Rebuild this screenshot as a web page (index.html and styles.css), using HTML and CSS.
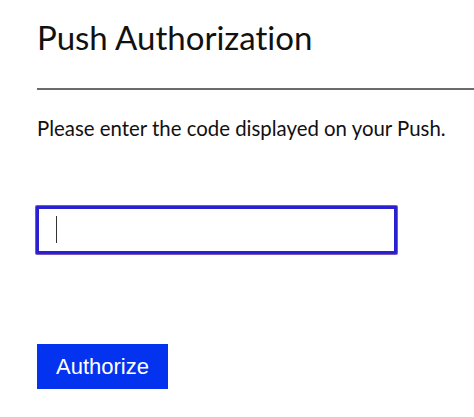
FILE: index.html
```html
<!DOCTYPE html>
<html lang="en">
<head>
<meta charset="utf-8">
<title>Push Authorization</title>
<link rel="stylesheet" href="styles.css">
</head>
<body>
<main class="page">
  <h1 class="title">Push Authorization</h1>
  <div class="rule"></div>
  <p class="lead">Please enter the code displayed on your Push.</p>
  <div class="field">
    <input class="code-input" type="text" aria-label="Code">
    <span class="caret"></span>
  </div>
  <button class="btn" type="button">Authorize</button>
</main>
</body>
</html>
```
FILE: styles.css
```css
html, body {
  margin: 0;
  padding: 0;
  background: #ffffff;
}
.page {
  padding: 20px 0 0 37px;
  font-family: "Lato", "Noto Sans", sans-serif;
  font-variant-ligatures: none;
  color: #111111;
}
.title {
  margin: 0;
  font-size: 33px;
  line-height: 34px;
  font-weight: 400;
}
.rule {
  margin-top: 34px;
  height: 2px;
  background: #6b6b6b;
}
.lead {
  margin: 26px 0 0 0;
  font-size: 20.4px;
  line-height: 24px;
}
.field {
  position: relative;
  margin: 66px 0 0 -1px;
  width: 361px;
  height: 48px;
}
.code-input {
  display: block;
  box-sizing: border-box;
  width: 361px;
  height: 48px;
  margin: 0;
  padding: 0 18px;
  border: 3px solid #2a20d2;
  box-shadow: 0 0 0 1px #7a58b8;
  border-radius: 1px;
  background: #ffffff;
  outline: none;
  font-size: 20px;
}
.caret {
  position: absolute;
  left: 20px;
  top: 10px;
  width: 1px;
  height: 27px;
  background: #333333;
}
.btn {
  display: block;
  margin-top: 90px;
  box-sizing: border-box;
  width: 131px;
  height: 45px;
  padding: 0;
  border: 0;
  border-radius: 0;
  background: #0433ef;
  color: #ffffff;
  font-family: "Liberation Sans", Arial, sans-serif;
  font-size: 22px;
  line-height: 45px;
  text-align: center;
}
```
